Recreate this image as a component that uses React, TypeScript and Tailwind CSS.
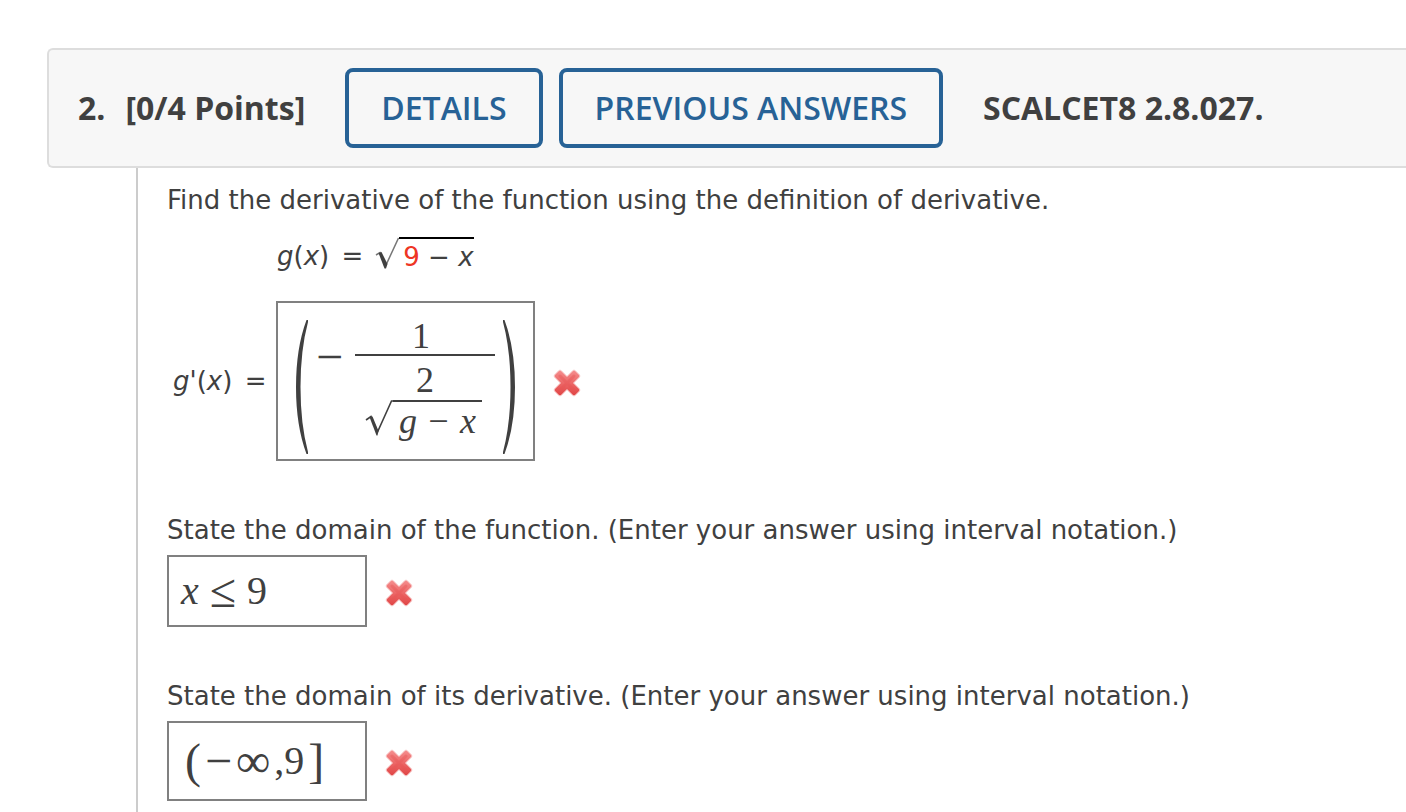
/**
 * Assignment question: header with point total, followed by the graded answers.
 */

import type { ReactNode } from 'react';

function HeaderButton({ children }: { children: ReactNode }) {
   return (
      <button
         type="button"
         className="h-20 shrink-0 rounded-lg border-4 border-[#276296] px-8 text-[32px] font-semibold whitespace-nowrap text-[#276296]"
      >
         {children}
      </button>
   );
}

function WrongMark() {
   return (
      <svg role="img" aria-label="Incorrect" viewBox="0 0 28 28" className="mt-1 h-7 w-7 shrink-0">
         <defs>
            <linearGradient id="wrong-fill" x1="0" y1="0" x2="0" y2="1">
               <stop offset="0" stopColor="#f58e8e" />
               <stop offset="0.5" stopColor="#ec6868" />
               <stop offset="1" stopColor="#e04444" />
            </linearGradient>
         </defs>
         <path
            d="M6 1.500 1.500 6Q.8 7 1.500 8L7.500 14 1.500 20Q.8 21 1.500 22L6 26.500Q7 27.200 8 26.500L14 20.500 20 26.500Q21 27.200 22 26.500L26.500 22Q27.200 21 26.500 20L20.500 14 26.500 8Q27.200 7 26.500 6L22 1.500Q21 .8 20 1.500L14 7.500 8 1.500Q7 .8 6 1.500Z"
            fill="url(#wrong-fill)"
            stroke="#f9c4c4"
            strokeWidth="1"
            strokeLinejoin="round"
         />
         <path
            d="M7 7 21 21M21 7 7 21"
            stroke="#e85454"
            strokeWidth="3"
            strokeLinecap="round"
            opacity="0.4"
         />
      </svg>
   );
}

interface AnswerProps {
   labelledBy: string;
   boxClass: string;
   children: ReactNode;
}

function Answer({ labelledBy, boxClass, children }: AnswerProps) {
   return (
      <div className="flex items-center gap-[18px]">
         <div
            role="textbox"
            aria-readonly="true"
            aria-labelledby={labelledBy}
            tabIndex={0}
            className={`flex items-center border-2 border-[#808080] font-['Liberation_Serif',serif] text-[40px] leading-10 ${boxClass}`}
         >
            {children}
         </div>
         <WrongMark />
      </div>
   );
}

function TallParen({ flip = false }: { flip?: boolean }) {
   return (
      <svg
         aria-hidden="true"
         viewBox="0 0 12 134"
         className={`mt-3 h-[134px] w-3 shrink-0 ${flip ? '-scale-x-100' : ''}`}
      >
         <path d="M10.500 0Q0 28 0 67T10.500 134H12V132Q4.500 104 4.500 67T12 2V0Z" fill="#404040" />
      </svg>
   );
}

function DerivativeAnswer() {
   return (
      <>
         <TallParen />
         <span className="mb-12 ml-2 w-[26px] text-center text-5xl">−</span>
         <div className="mr-2 mb-1.5 ml-[13px] flex grow flex-col text-4xl leading-10">
            <span className="h-10 border-b-2 border-[#404040] pr-2 text-center">1</span>
            <span className="h-11 text-center leading-[48px]">2</span>
            <div className="ml-2.5 flex">
               <svg aria-hidden="true" viewBox="0 0 28 36" className="h-9 w-7 shrink-0">
                  <path
                     d="M1 20 6 16.500 12.500 32 26.500 1H28"
                     fill="none"
                     stroke="#404040"
                     strokeWidth="1.6"
                  />
                  <path d="m4.500 17 7 18.500H12.500L13.500 31 7.500 16.500Z" fill="#404040" />
               </svg>
               <div className="flex h-10 w-[89px] items-center justify-between border-t-2 border-[#404040] px-1.5">
                  <i>g</i>
                  <span>−</span>
                  <i>x</i>
               </div>
            </div>
         </div>
         <TallParen flip />
      </>
   );
}

export default function App() {
   return (
      <div className="flex min-h-screen flex-col overflow-hidden bg-white pt-12 pl-[47px] text-[#404040]">
         <header className="flex h-[120px] items-center rounded-l-md border-2 border-r-0 border-[#dddddd] bg-[#f7f7f7] pl-[29px] font-['Open_Sans',sans-serif] text-[32px] font-bold whitespace-nowrap">
            <h2 className="flex gap-5">
               <span>2.</span>
               <span>[0/4 Points]</span>
            </h2>
            <div className="mr-10 ml-10 flex gap-4">
               <HeaderButton>DETAILS</HeaderButton>
               <HeaderButton>PREVIOUS ANSWERS</HeaderButton>
            </div>
            <span>SCALCET8 2.8.027.</span>
         </header>

         <main className="ml-[89px] grow border-l-2 border-[#cccccc] pt-4 pb-[11px] pl-[29px] font-['DejaVu_Sans',sans-serif] text-[26px] leading-8">
            <section>
               <p>Find the derivative of the function using the definition of derivative.</p>
               <div className="mt-4 ml-[110px] flex h-12 items-center">
                  <span>
                     <i>g</i>(<i>x</i>) <span className="ml-1">=</span>
                  </span>
                  <div className="ml-3 flex leading-9">
                     <svg aria-hidden="true" viewBox="0 0 24 32" className="h-8 w-6 shrink-0">
                        <path d="M1 18 5 15.500 11 28 23.500 1" fill="none" stroke="#777777" strokeWidth="1.5" />
                        <path d="m3.500 16 6 15.500H11L12.500 27 6.500 15Z" fill="#404040" />
                     </svg>
                     <span className="border-t-2 border-black pl-1">
                        <span className="text-[#ee3524]">9</span> − <i>x</i>
                     </span>
                  </div>
               </div>
               <div className="mt-[21px] flex items-center pl-1.5">
                  <span id="derivative-label" className="w-[103px] whitespace-nowrap">
                     <i>g'</i>(<i>x</i>) <span className="ml-1">=</span>
                  </span>
                  <Answer labelledBy="derivative-label" boxClass="h-40 w-[259px] px-[18px]">
                     <DerivativeAnswer />
                  </Answer>
               </div>
            </section>

            <section className="mt-[53px]">
               <p id="domain-label" className="mb-[9px]">
                  State the domain of the function. (Enter your answer using interval notation.)
               </p>
               <Answer labelledBy="domain-label" boxClass="h-[72px] w-[200px] gap-[11px] px-3">
                  <i>x</i>
                  <span className="text-5xl">≤</span>
                  <span>9</span>
               </Answer>
            </section>

            <section className="mt-[53px]">
               <p id="derivative-domain-label" className="mb-[9px]">
                  State the domain of its derivative. (Enter your answer using interval notation.)
               </p>
               <Answer labelledBy="derivative-domain-label" boxClass="h-20 w-[200px] gap-1 px-4">
                  <span className="text-5xl">(</span>
                  <span className="text-5xl">−</span>
                  <span className="text-5xl">∞</span>
                  <span>,9</span>
                  <span className="text-5xl">]</span>
               </Answer>
            </section>
         </main>
      </div>
   );
}
